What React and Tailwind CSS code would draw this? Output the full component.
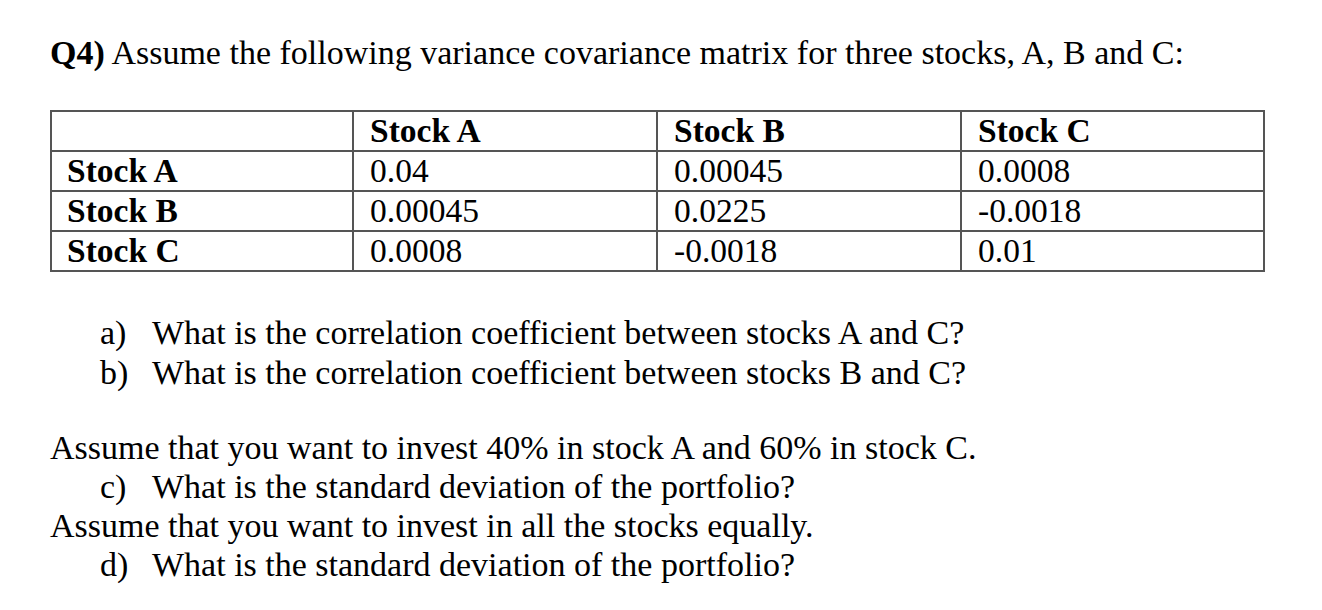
import React from 'react';

const rows = [
    ['Stock A', '0.04', '0.00045', '0.0008'],
    ['Stock B', '0.00045', '0.0225', '-0.0018'],
    ['Stock C', '0.0008', '-0.0018', '0.01'],
];

function Item({ label, children, lh = 'leading-[40px]' }) {
    return (
        <div className={`flex pl-[50px] ${lh}`}>
            <span className="w-[52px] shrink-0">{label}</span>
            <span>{children}</span>
        </div>
    );
}

export default function App() {
    return (
        <div className="min-h-screen bg-white text-black text-[34px] pl-[50px] pt-[33px]" style={{ fontFamily: '"Liberation Serif", "Times New Roman", serif' }}>
            <p className="leading-[40px] whitespace-nowrap">
                <b>Q4)</b> Assume the following variance covariance matrix for three stocks, A, B and C:
            </p>

            {/* ma trận hiệp phương sai */}
            <table className="mt-[37px] w-[1215px] table-fixed border-collapse border-2 border-[#555] text-[33.5px]">
                <colgroup>
                    <col className="w-[302px]" />
                    <col className="w-[304px]" />
                    <col className="w-[304px]" />
                    <col />
                </colgroup>
                <thead>
                    <tr className="h-[40px]">
                        <th className="border-2 border-[#555]"></th>
                        <th className="border-2 border-[#555] text-left font-bold pl-[16px] leading-[38px]">Stock A</th>
                        <th className="border-2 border-[#555] text-left font-bold pl-[16px] leading-[38px]">Stock B</th>
                        <th className="border-2 border-[#555] text-left font-bold pl-[16px] leading-[38px]">Stock C</th>
                    </tr>
                </thead>
                <tbody>
                    {rows.map((r) => (
                        <tr key={r[0]} className="h-[40px]">
                            <td className="border-2 border-[#555] font-bold pl-[15px] leading-[38px]">{r[0]}</td>
                            <td className="border-2 border-[#555] pl-[16px] leading-[38px]">{r[1]}</td>
                            <td className="border-2 border-[#555] pl-[16px] leading-[38px]">{r[2]}</td>
                            <td className="border-2 border-[#555] pl-[16px] leading-[38px]">{r[3]}</td>
                        </tr>
                    ))}
                </tbody>
            </table>

            <div className="mt-[41px] whitespace-nowrap">
                <Item label="a)">What is the correlation coefficient between stocks A and C?</Item>
                <Item label="b)">What is the correlation coefficient between stocks B and C?</Item>
            </div>

            <div className="mt-[35px] leading-[39px] whitespace-nowrap">
                <p>Assume that you want to invest 40% in stock A and 60% in stock C.</p>
                <Item label="c)" lh="leading-[39px]">What is the standard deviation of the portfolio?</Item>
                <p>Assume that you want to invest in all the stocks equally.</p>
                <Item label="d)" lh="leading-[39px]">What is the standard deviation of the portfolio?</Item>
            </div>
        </div>
    );
}
